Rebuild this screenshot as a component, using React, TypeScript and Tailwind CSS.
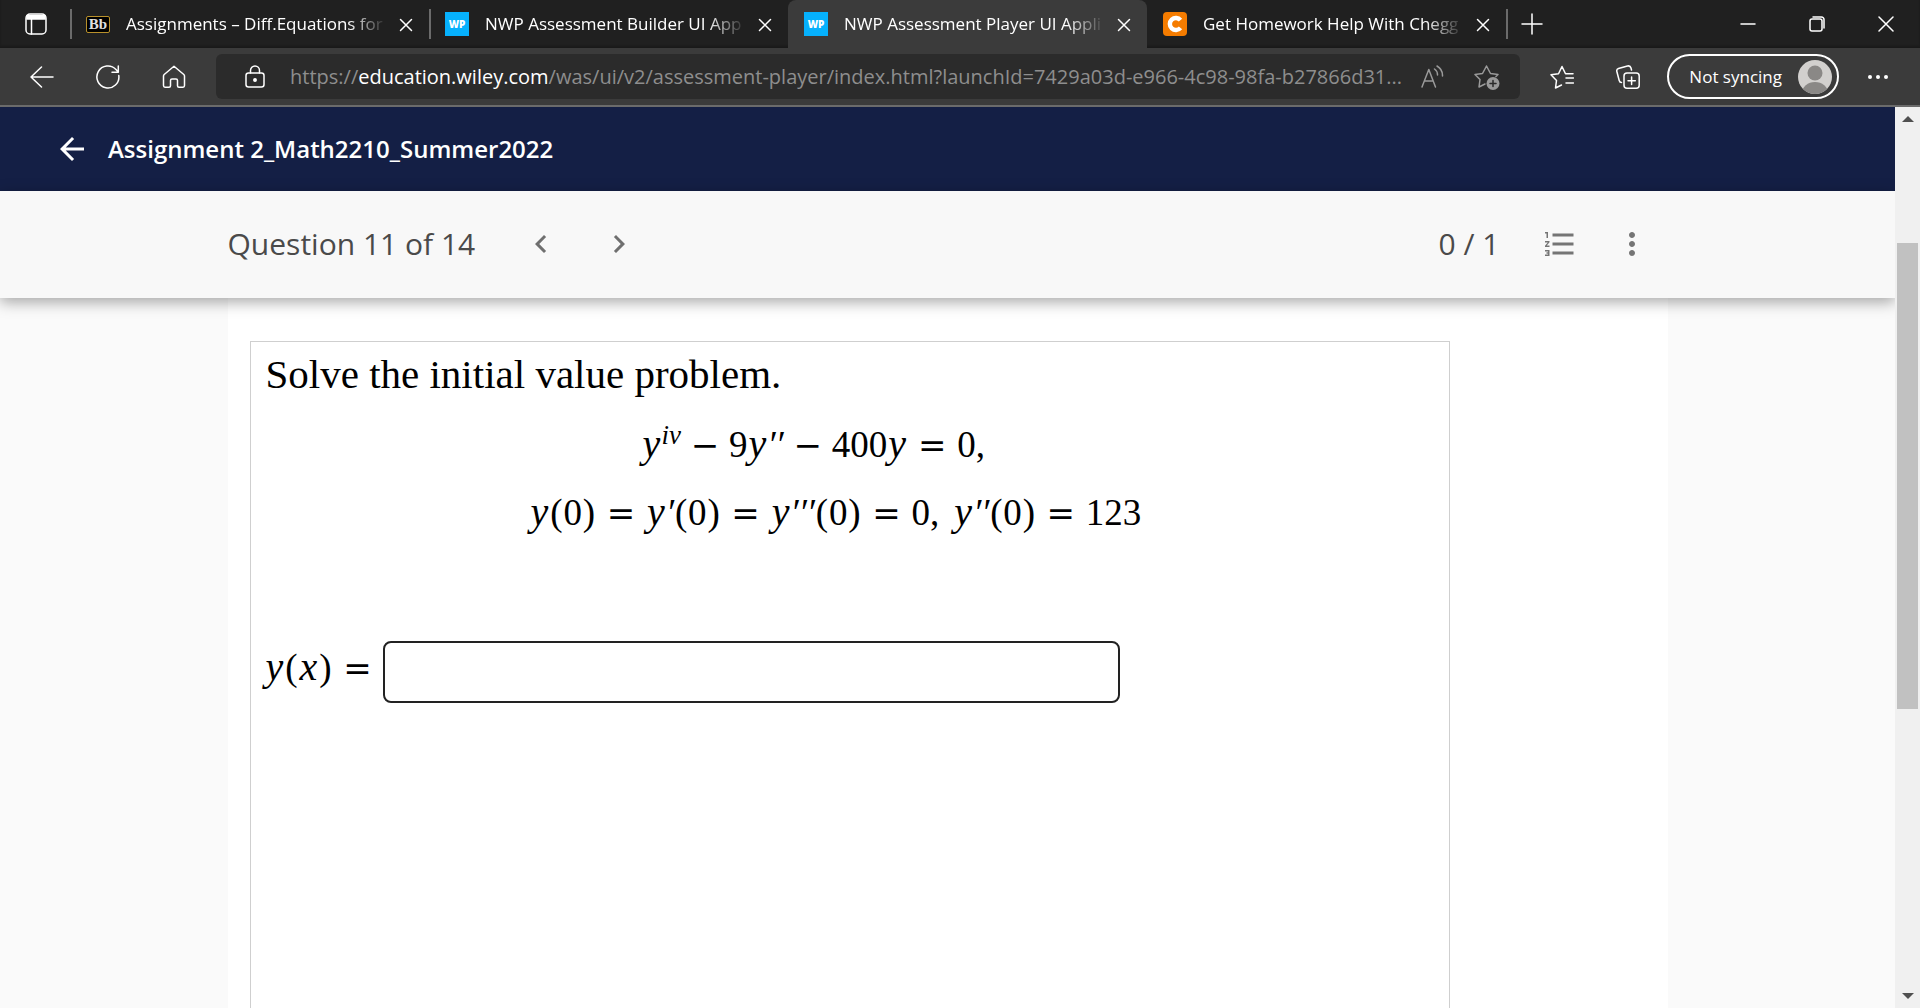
import React, { useState } from "react";
import {
  MdArrowBack,
  MdChevronLeft,
  MdChevronRight,
  MdFormatListNumbered,
  MdMoreVert,
} from "react-icons/md";

interface TabInfo {
  id: number;
  title: string;
  icon: "bb" | "wp" | "chegg";
  divider?: boolean;
}

const TABS: TabInfo[] = [
  { id: 1, title: "Assignments – Diff.Equations for", icon: "bb", divider: true },
  { id: 2, title: "NWP Assessment Builder UI App", icon: "wp", divider: true },
  { id: 3, title: "NWP Assessment Player UI Appli", icon: "wp" },
  { id: 4, title: "Get Homework Help With Chegg", icon: "chegg" },
];

const ACTIVE_TAB = 3;

/* Browser icons */

interface IconProps {
  size?: number;
  className?: string;
  children: React.ReactNode;
}

const Icon: React.FC<IconProps> = ({ size = 24, className, children }) => (
  <svg
    width={size}
    height={size}
    viewBox={`0 0 ${size} ${size}`}
    fill="none"
    stroke="currentColor"
    strokeWidth={1.5}
    strokeLinecap="round"
    strokeLinejoin="round"
    aria-hidden="true"
    className={className}
  >
    {children}
  </svg>
);

const CloseIcon = () => (
  <Icon size={14}>
    <path d="M1.5 1.5l11 11M12.5 1.5l-11 11" />
  </Icon>
);

const Favicon: React.FC<{ icon: TabInfo["icon"] }> = ({ icon }) => {
  if (icon === "bb") {
    return (
      <span className="flex h-[17px] w-6 shrink-0 items-center justify-center rounded-[2px] border border-[#b8902b] bg-black font-['Liberation_Serif',serif] text-[15px] leading-none font-bold text-[#e0e0e0]">
        Bb
      </span>
    );
  }
  if (icon === "wp") {
    return (
      <span className="flex size-6 shrink-0 items-center justify-center bg-[#06b1fd] text-[10px] leading-none font-extrabold text-white">
        WP
      </span>
    );
  }
  return (
    <svg width="24" height="24" viewBox="0 0 24 24" className="shrink-0" aria-hidden="true">
      <rect width="24" height="24" rx="4" fill="#f57c00" />
      <path
        d="M17.5 8.2A6 6 0 1 0 17.5 15.8"
        fill="none"
        stroke="#fff"
        strokeWidth="4.4"
      />
    </svg>
  );
};

const Tab: React.FC<{ tab: TabInfo }> = ({ tab }) => {
  const active = tab.id === ACTIVE_TAB;
  return (
    <div
      className={`flex max-w-[359px] min-w-0 flex-1 items-center ${
        active ? "rounded-t-lg bg-[#3b3b3b]" : ""
      }`}
    >
      <span className={`h-[30px] w-[2px] ${tab.divider ? "bg-[#6b6b6b]" : ""}`} />
      <button className="ml-[14px] flex min-w-0 flex-1 items-center gap-4 text-left">
        <Favicon icon={tab.icon} />
        <span className="flex-1 overflow-hidden text-[17px] leading-6 whitespace-nowrap text-white [mask-image:linear-gradient(to_right,#000_85%,transparent)]">
          {tab.title}
        </span>
      </button>
      <button aria-label={`Close ${tab.title}`} className="mr-4 ml-3 pt-px">
        <CloseIcon />
      </button>
    </div>
  );
};

const TabStrip = () => (
  <div className="flex h-12 bg-[#202020] shadow-[inset_0_-2px_2px_#1a1a1a]">
    <button aria-label="Tab actions" className="flex w-[70px] shrink-0 items-center justify-center pl-[2px]">
      <Icon>
        <rect x="2" y="2" width="20" height="20" rx="4" />
        <path d="M3 3.5h18v3.5H3z" fill="currentColor" />
        <path d="M7.5 7v15" />
      </Icon>
    </button>
    {TABS.map((tab) => (
      <Tab key={tab.id} tab={tab} />
    ))}
    <span className="my-auto h-[30px] w-[2px] bg-[#6b6b6b]" />
    <button aria-label="New tab" className="px-3">
      <Icon>
        <path d="M12 2v20M2 12h20" />
      </Icon>
    </button>
    <div className="ml-auto flex">
      <button aria-label="Minimize" className="flex w-[69px] items-center justify-center">
        <Icon size={16}>
          <path d="M1 8h14" />
        </Icon>
      </button>
      <button aria-label="Restore" className="flex w-[69px] items-center justify-center">
        <Icon size={16}>
          <rect x="1" y="3" width="12" height="12" rx="2" />
          <path d="M4 1h8.500a2.500 2.500 0 0 1 2.500 2.500V12" />
        </Icon>
      </button>
      <button aria-label="Close window" className="flex w-[69px] items-center justify-center">
        <Icon size={16}>
          <path d="M1 1l14 14M15 1L1 15" />
        </Icon>
      </button>
    </div>
  </div>
);

const Toolbar = () => (
  <div className="flex h-[59px] items-center border-b-2 border-[#6b6b6b] bg-[#3b3b3b] text-white">
    <div className="flex w-[216px] shrink-0 items-center gap-[42px] pl-[30px]">
      <button aria-label="Back">
        <Icon>
          <path d="M23 12H1M11.500 2L1 12l10.500 10" />
        </Icon>
      </button>
      <button aria-label="Refresh">
        <Icon>
          <path d="M22.800 10.500A11 11 0 1 1 20 4.500L22 6.800M22.300 1v6.300h-6.300" />
        </Icon>
      </button>
      <button aria-label="Home">
        <Icon>
          <path d="M12 1.200L2.200 9.500c-.4.400-.7.900-.7 1.500v9.500c0 1 .6 1.700 1.500 1.700h4c.8 0 1.500-.6 1.500-1.500v-5.200c0-.9.600-1.500 1.500-1.500h4c.9 0 1.500.6 1.500 1.500v5.200c0 .9.700 1.500 1.500 1.500h4c.9 0 1.500-.7 1.500-1.700V11c0-.6-.3-1.100-.7-1.500z" />
        </Icon>
      </button>
    </div>

    {/* Address bar */}
    <div className="flex h-[45px] min-w-0 flex-1 items-center rounded-md bg-[#2b2b2b] pl-[27px]">
      <button aria-label="View site information">
        <Icon>
          <rect x="3" y="8" width="18" height="14" rx="2.500" />
          <path d="M7.500 8V5.500a4.500 4.500 0 0 1 9 0V8" />
          <circle cx="12" cy="15" r="1.200" fill="currentColor" />
        </Icon>
      </button>
      <a
        href="#"
        className="ml-[23px] min-w-0 flex-1 truncate text-xl text-[#8e8e8e]"
      >
        https://<span className="text-white">education.wiley.com</span>
        /was/ui/v2/assessment-player/index.html?launchId=7429a03d-e966-4c98-98fa-b27866d31...
      </a>
      <div className="flex gap-[30px] pr-5 pl-4 text-[#9a9a9a]">
        <button aria-label="Read aloud">
          <Icon>
            <path d="M2 22L8.800 4.500 15.500 22M4.500 16h8.500M14.500 4a7 7 0 0 1 3 6M17 1a11 11 0 0 1 5.500 10" />
          </Icon>
        </button>
        <button aria-label="Add this page to favorites">
          <Icon size={26}>
            <path d="M11 20l-6 3 1-7.500-5-5 7.500-1L12.500 2l4 7.500 7.500 1-2 2" />
            <circle cx="19" cy="19.500" r="6.500" fill="currentColor" stroke="none" />
            <path d="M19 16.500v6M16 19.500h6" stroke="#2b2b2b" />
          </Icon>
        </button>
      </div>
    </div>

    <div className="flex shrink-0 items-center pr-8 pl-[30px]">
      <button aria-label="Favorites">
        <Icon>
          <path d="M11.500 20L5.500 23l1-7.500L1 9.800l7.500-1L12 1.500l3.500 7.300H23M16 13h7.500M16 18h7.500" />
        </Icon>
      </button>
      <button aria-label="Collections" className="ml-[42px]">
        <Icon>
          <rect x="8" y="8" width="15.200" height="15.200" rx="3" />
          <path d="M15.600 12v7.500M12 15.700h7.300M5.500 17.500c-1.500 0-2-.8-2.300-2L.9 6.800C.5 5.300 1 4 2.500 3.500L11.500 1c1.700-.4 3 .2 3.500 2l.5 2" />
        </Icon>
      </button>
      <button className="ml-[27px] flex h-[45px] items-center gap-4 rounded-full border-2 border-white pr-[5px] pl-5 text-[17px]">
        Not syncing
        <svg width="34" height="34" viewBox="0 0 34 34" aria-hidden="true">
          <clipPath id="avatar">
            <circle cx="17" cy="17" r="17" />
          </clipPath>
          <g clipPath="url(#avatar)">
            <rect width="34" height="34" fill="#d2d0ce" />
            <circle cx="17" cy="13" r="7.500" fill="#8a8886" />
            <ellipse cx="17" cy="33" rx="13" ry="11" fill="#8a8886" />
          </g>
        </svg>
      </button>
      <button aria-label="Settings and more" className="ml-[29px]">
        <svg width="20" height="20" viewBox="0 0 20 20" fill="currentColor" aria-hidden="true">
          <circle cx="2" cy="10" r="2" />
          <circle cx="10" cy="10" r="2" />
          <circle cx="18" cy="10" r="2" />
        </svg>
      </button>
    </div>
  </div>
);

/* Math pieces. Each one keeps a fixed cell so that the rows line up. */

const Var: React.FC<{ children: string }> = ({ children }) => (
  <i className="inline-block w-5 text-center text-[40px] leading-none">{children}</i>
);

const Paren: React.FC<{ children: string }> = ({ children }) => (
  <span className="inline-block w-[14px] text-center">{children}</span>
);

const Minus = () => (
  <span className="inline-block w-12 text-center font-['DejaVu_Serif',serif] text-[34px] leading-none">
    −
  </span>
);

const Equals = () => (
  <span className="inline-block w-[50px] text-center font-['DejaVu_Serif',serif] text-[34px] leading-none">
    =
  </span>
);

// y, y', y'' ... evaluated at zero
const AtZero: React.FC<{ primes?: string }> = ({ primes = "" }) => (
  <>
    <Var>y</Var>
    <i>{primes}</i>
    <Paren>(</Paren>0<Paren>)</Paren>
  </>
);

const Problem = () => {
  const [answer, setAnswer] = useState("");

  return (
    <section className="ml-[22px] flex-1 border border-b-0 border-[#cfcfcf] font-['Liberation_Serif',serif] text-[37px] leading-[68px] whitespace-nowrap text-black md:mr-[218px]">
      <p className="pl-[15px] text-[41px] leading-[64px]">Solve the initial value problem.</p>

      <div className="mt-[5px] ml-[279px]">
        <p className="ml-[112px]">
          <Var>y</Var>
          <sup className="text-[27px] leading-none italic">iv</sup>
          <Minus />9<Var>y</Var>
          <i>′′</i>
          <Minus />400<Var>y</Var>
          <Equals />0,
        </p>
        <p>
          <AtZero />
          <Equals />
          <AtZero primes="′" />
          <Equals />
          <AtZero primes="′′′" />
          <Equals />
          <span className="mr-[14px]">0,</span>
          <AtZero primes="′′" />
          <Equals />123
        </p>
      </div>

      <div className="mt-[91px] flex items-center pl-[14px]">
        <label htmlFor="answer" className="pb-2 leading-[60px]">
          <Var>y</Var>
          <Paren>(</Paren>
          <Var>x</Var>
          <Paren>)</Paren>
          <Equals />
        </label>
        <input
          id="answer"
          type="text"
          value={answer}
          onChange={(e) => setAnswer(e.target.value)}
          className="h-[62px] w-[737px] rounded-lg border-2 border-[#222] bg-white px-3 text-3xl outline-none"
        />
      </div>
    </section>
  );
};

const Scrollbar = () => (
  <div className="flex w-[25px] shrink-0 flex-col items-center bg-[#f0f0f0] py-[9px]" aria-hidden="true">
    <svg width="12" height="6" viewBox="0 0 12 6" fill="#505050">
      <path d="M0 6l6-6 6 6z" />
    </svg>
    <div className="mt-[121px] h-[466px] w-[21px] bg-[#c1c1c1]" />
    <svg width="12" height="6" viewBox="0 0 12 6" fill="#505050" className="mt-auto">
      <path d="M0 0l6 6 6-6z" />
    </svg>
  </div>
);

const App = () => {
  return (
    <div className="flex min-h-screen flex-col overflow-hidden font-['Open_Sans',sans-serif]">
      <div className="text-white">
        <TabStrip />
        <Toolbar />
      </div>

      <div className="flex flex-1">
        <div className="flex min-w-0 flex-1 flex-col overflow-hidden bg-[#fafafa]">
          {/* Assignment header */}
          <header className="flex h-[84px] items-center gap-[18px] bg-[#141f45] pl-[54px] text-white">
            <button aria-label="Back to assignments">
              <MdArrowBack size={36} />
            </button>
            <h1 className="text-2xl font-semibold">Assignment 2_Math2210_Summer2022</h1>
          </header>

          {/* Question navigation */}
          <nav className="z-10 h-[107px] bg-[#f8f8f8] pb-[2px] shadow-[0_4px_14px_rgba(0,0,0,0.35)]">
            <div className="mx-auto flex h-full max-w-[1440px] items-center text-3xl text-[#4a4a4a]">
              <h2>Question 11 of 14</h2>
              <div className="ml-12 flex gap-[42px] text-[#6f6f6f]">
                <button aria-label="Previous question">
                  <MdChevronLeft size={36} />
                </button>
                <button aria-label="Next question">
                  <MdChevronRight size={36} />
                </button>
              </div>
              <span className="ml-auto">0 / 1</span>
              <div className="ml-[42px] flex gap-9 pr-[18px] text-[#757575]">
                <button aria-label="Question list">
                  <MdFormatListNumbered size={36} />
                </button>
                <button aria-label="More options">
                  <MdMoreVert size={36} />
                </button>
              </div>
            </div>
          </nav>

          <main className="mx-auto flex w-full max-w-[1440px] flex-1 flex-col bg-white pt-[43px]">
            <Problem />
          </main>
        </div>
        <Scrollbar />
      </div>
    </div>
  );
};

export default App;
